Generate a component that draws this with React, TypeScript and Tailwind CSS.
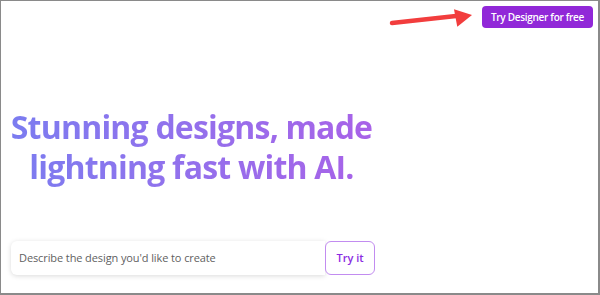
export default function App() {
  return (
    <div
      className="w-[600px] h-[295px] bg-white border-t border-l border-r-2 border-b-2 border-[#8a8a8a] flex flex-col overflow-hidden"
      style={{ fontFamily: '"Open Sans", "Noto Sans", sans-serif' }}
    >
      <div className="flex justify-end items-start pr-[5px] gap-[8px]">
        <svg width="86" height="22" viewBox="0 0 86 22" className="mt-[6px]">
          <line x1="4" y1="16" x2="68" y2="9" stroke="#f23d3d" strokeWidth="4.5" strokeLinecap="round" />
          <polygon points="66,2.3 84,8 69.3,19.7" fill="#f23d3d" />
        </svg>
        <button className="mt-[5px] w-[111px] h-[22px] rounded-[4px] bg-[#9128d8] text-white text-[10px] tracking-[-0.3px] font-semibold">
          Try Designer for free
        </button>
      </div>
      <div className="w-[381px] flex flex-col items-center">
        <h1 className="mt-[78px] whitespace-nowrap text-center text-[32px] leading-[40px] tracking-[-0.8px] font-bold bg-gradient-to-r from-[#7b7cf0] to-[#a862e8] bg-clip-text text-transparent">
          Stunning designs, made
          <br />
          lightning fast with AI.
        </h1>
        <div className="mt-[54px] ml-[3px] flex items-stretch w-[364px] h-[34px]">
          <div className="flex-1 flex items-center bg-white rounded-l-[6px] shadow-[0_1px_5px_rgba(0,0,0,0.15)] pl-[8px] text-[11px] tracking-[-0.1px] text-[#5f5f5f]">
            Describe the design you'd like to create
          </div>
          <button className="w-[50px] rounded-[6px] border border-[#c28cf0] bg-white text-[#8a2be2] text-[11px] font-semibold">
            Try it
          </button>
        </div>
      </div>
    </div>
  );
}
